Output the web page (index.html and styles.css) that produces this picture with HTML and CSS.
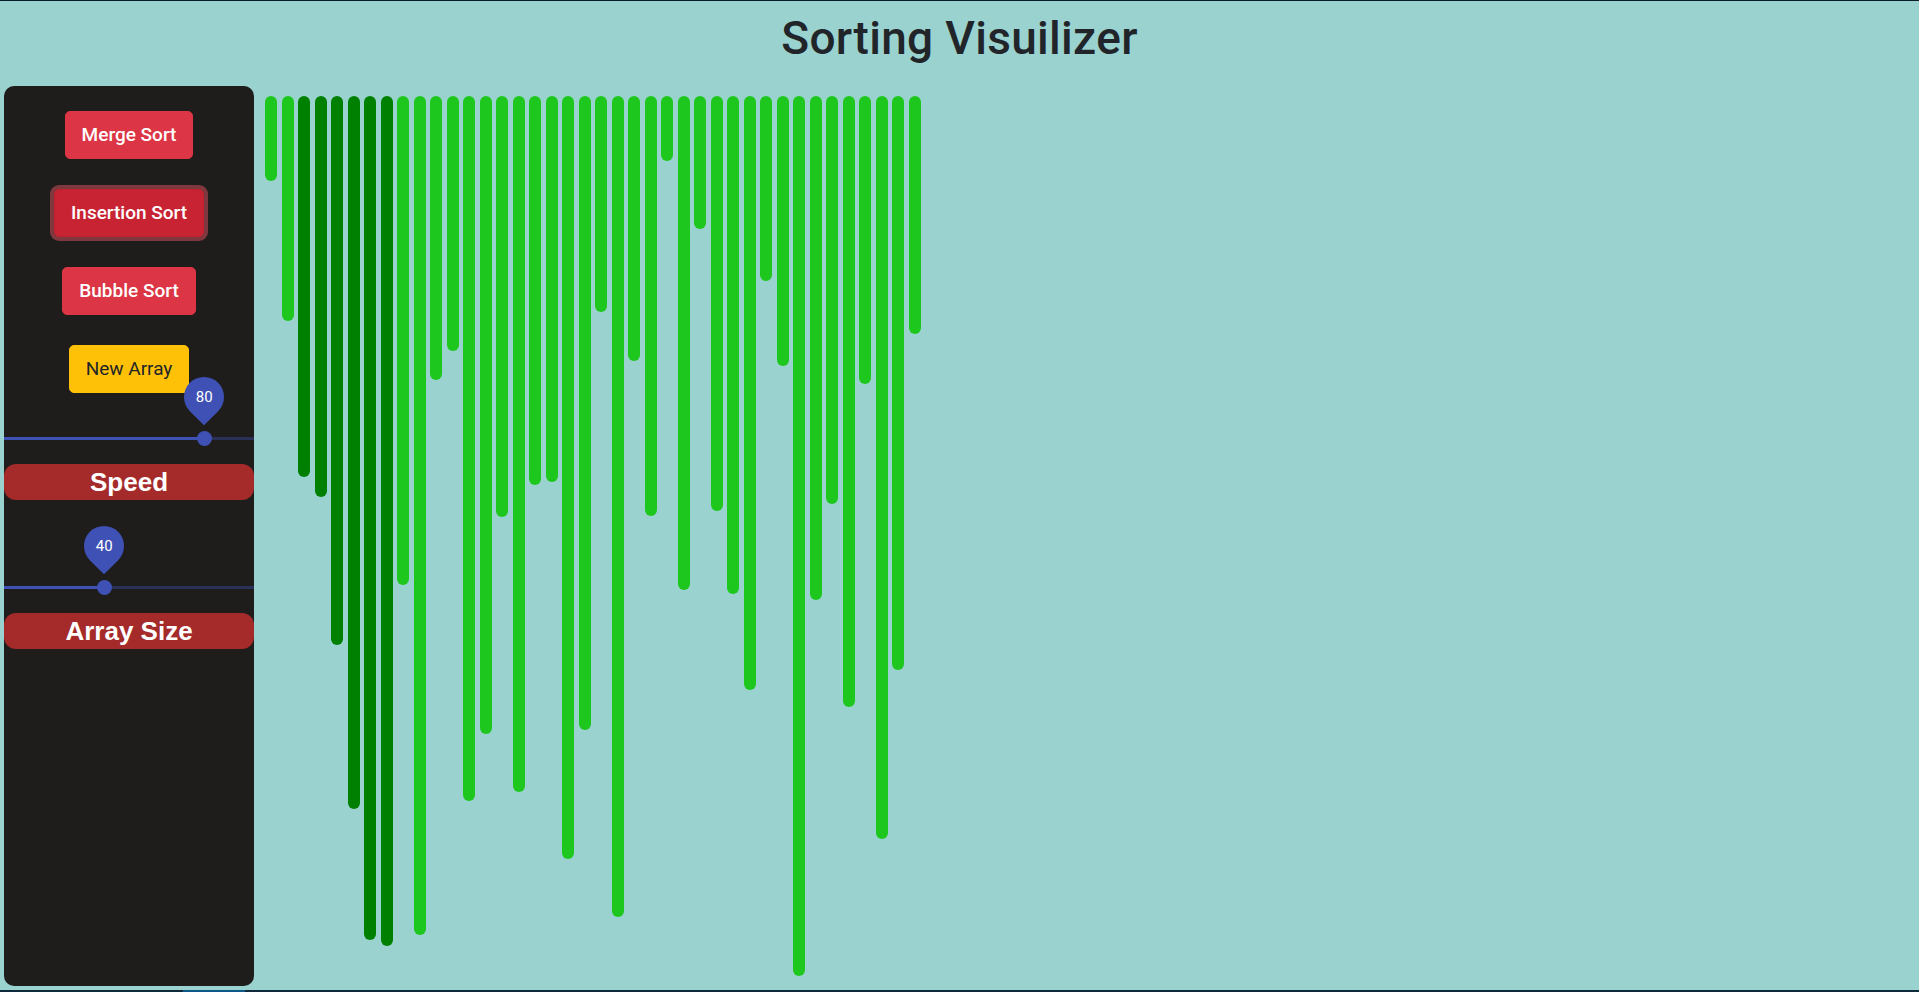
FILE: index.html
```html
<!DOCTYPE html>
<html lang="en">
<head>
    <meta charset="UTF-8">
    <meta name="viewport" content="width=device-width, initial-scale=1.0">
    <title>Sorting Visuilizer</title>
    <link rel="stylesheet" href="styles.css">
</head>
<body>
    <div class="page">
        <h1 class="title">Sorting Visuilizer</h1>
        <main class="main">
            <aside class="panel">
                <button class="btn btn-danger">Merge Sort</button>
                <button class="btn btn-danger active">Insertion Sort</button>
                <button class="btn btn-danger">Bubble Sort</button>
                <button class="btn btn-warning">New Array</button>

                <div class="slider slider-speed">
                    <span class="rail"></span>
                    <span class="track" style="width: 80%"></span>
                    <span class="thumb" style="left: 80%">
                        <span class="value-label"><span>80</span></span>
                    </span>
                </div>
                <div class="slider-name">Speed</div>

                <div class="slider slider-size">
                    <span class="rail"></span>
                    <span class="track" style="width: 40%"></span>
                    <span class="thumb" style="left: 40%">
                        <span class="value-label"><span>40</span></span>
                    </span>
                </div>
                <div class="slider-name">Array Size</div>
            </aside>
            <section class="bars" id="bars"></section>
        </main>
        <div class="taskbar"><span class="taskbar-item"></span></div>
    </div>
    <script>
        // current array, bar heights in px
        const heights = [85, 225, 381, 401, 549, 713, 844, 850, 489, 839,
                         284, 255, 705, 638, 421, 696, 389, 386, 763, 634,
                         216, 821, 265, 420, 65, 494, 133, 415, 498, 594,
                         185, 270, 880, 504, 408, 611, 288, 743, 574, 238];
        const bars = document.getElementById('bars');
        heights.forEach((h, i) => {
            const bar = document.createElement('div');
            bar.className = (i >= 2 && i <= 7) ? 'bar bar-active' : 'bar';
            bar.style.height = h + 'px';
            bars.appendChild(bar);
        });
    </script>
</body>
</html>
```

FILE: styles.css
```css
html, body {
    margin: 0;
    padding: 0;
}

body {
    background-color: #9ad2cf;
    font-family: Roboto, "Liberation Sans", sans-serif;
    color: #212529;
}

.page {
    height: 100vh;
    box-sizing: border-box;
    border-top: 1px solid #0c1a2c;
    display: flex;
    flex-direction: column;
}

.title {
    margin: 0;
    padding-top: 10px;
    height: 85px;
    box-sizing: border-box;
    text-align: center;
    font-size: 46px;
    font-weight: 500;
    line-height: 55px;
    letter-spacing: 0.3px;
}

.main {
    flex: 1;
    display: flex;
    align-items: flex-start;
    gap: 11px;
    padding: 0 4px;
}

.panel {
    width: 250px;
    height: 900px;
    flex-shrink: 0;
    background-color: #1e1d1c;
    border-radius: 10px;
    display: flex;
    flex-direction: column;
    align-items: center;
    padding-top: 25px;
    box-sizing: border-box;
}

.btn {
    font-family: Roboto, "Liberation Sans", sans-serif;
    font-size: 19px;
    line-height: 30px;
    padding: 8px 16px;
    border: 1px solid transparent;
    border-radius: 5px;
    margin-bottom: 30px;
    cursor: pointer;
}

.btn-danger {
    background-color: #dc3545;
    border-color: #dc3545;
    color: white;
    font-weight: 500;
}

.btn-danger.active {
    background-color: #c82333;
    border-color: #bd2130;
    box-shadow: 0 0 0 4px rgba(225, 83, 97, 0.5);
}

.btn-warning {
    background-color: #ffc107;
    border-color: #ffc107;
    color: #212529;
    margin-bottom: 0;
}

.slider {
    position: relative;
    width: 100%;
    height: 16px;
}

.slider-speed {
    margin-top: 37px;
}

.slider-size {
    margin-top: 79px;
}

.rail, .track {
    position: absolute;
    left: 0;
    top: 7px;
    height: 2.5px;
}

.rail {
    width: 100%;
    background-color: #2b3156;
}

.track {
    background-color: #3f51b5;
}

.thumb {
    position: absolute;
    top: 8px;
    width: 15px;
    height: 15px;
    margin: -7.5px 0 0 -7.5px;
    border-radius: 50%;
    background-color: #3f51b5;
}

.value-label {
    position: absolute;
    left: -12.5px;
    top: -54px;
    width: 40px;
    height: 40px;
    border-radius: 50% 50% 50% 0;
    background-color: #3f51b5;
    transform: rotate(-45deg);
    display: flex;
    align-items: center;
    justify-content: center;
}

.value-label span {
    transform: rotate(45deg);
    color: white;
    font-size: 15px;
}

.slider-name {
    width: 100%;
    margin-top: 18px;
    height: 36px;
    line-height: 36px;
    border-radius: 12px;
    background-color: brown;
    color: white;
    text-align: center;
    font-family: "Liberation Sans", Arial, sans-serif;
    font-weight: bold;
    font-size: 26px;
}

.bars {
    display: flex;
    align-items: flex-start;
    gap: 4.5px;
    margin-top: 10px;
}

.bar {
    width: 12px;
    background-color: #1ec71e;
    border-radius: 6px;
}

.bar-active {
    background-color: #008000;
}

.taskbar {
    height: 2px;
    background-color: #0f2a3a;
}

.taskbar-item {
    display: block;
    margin-left: 183px;
    width: 62px;
    height: 2px;
    background-color: #0d5a8a;
}
```
